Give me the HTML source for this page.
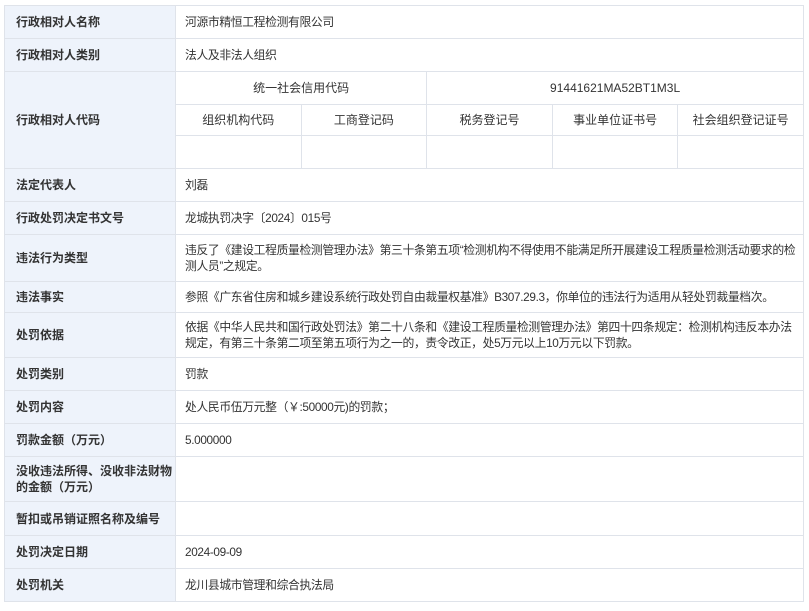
<!DOCTYPE html>
<html><head><meta charset="utf-8"><style>
body{margin:0;background:#fff;font-family:"Liberation Sans","Noto Sans CJK SC",sans-serif;font-size:12px;color:#333}
.t{position:absolute;left:4px;top:5px;width:800px;border-collapse:collapse;table-layout:fixed}
.t td{border:1px solid #dfe3ea;padding:0 0 0 9px;line-height:16px;vertical-align:middle;overflow:hidden}
.t td.v{letter-spacing:-0.35px;font-size:11.8px;padding-right:0}
.t td.l{background:#eef3fb;font-weight:bold;color:#333;padding-left:11px}
.s{width:100%;border-collapse:collapse;table-layout:fixed;height:100%}
.s td{text-align:center;padding:0;border:1px solid #dfe3ea}
.t td.n{padding:0}
</style></head><body>
<table class="t">
<colgroup><col style="width:171px"><col></colgroup>
<tr style="height:33px"><td class="l">行政相对人名称</td><td class="v">河源市精恒工程检测有限公司</td></tr>
<tr style="height:33px"><td class="l">行政相对人类别</td><td class="v">法人及非法人组织</td></tr>
<tr style="height:96px"><td class="l">行政相对人代码</td><td class="n">
<table class="s" style="margin:-1px;width:calc(100% + 2px);height:98px">
<tr style="height:33px"><td colspan="2">统一社会信用代码</td><td colspan="3">91441621MA52BT1M3L</td></tr>
<tr style="height:30px"><td>组织机构代码</td><td>工商登记码</td><td>税务登记号</td><td>事业单位证书号</td><td>社会组织登记证号</td></tr>
<tr style="height:33px"><td></td><td></td><td></td><td></td><td></td></tr>
</table></td></tr>
<tr style="height:33px"><td class="l">法定代表人</td><td class="v">刘磊</td></tr>
<tr style="height:33px"><td class="l">行政处罚决定书文号</td><td class="v">龙城执罚决字〔2024〕015号</td></tr>
<tr style="height:47px"><td class="l">违法行为类型</td><td class="v">违反了《建设工程质量检测管理办法》第三十条第五项“检测机构不得使用不能满足所开展建设工程质量检测活动要求的检测人员”之规定。</td></tr>
<tr style="height:31px"><td class="l">违法事实</td><td class="v">参照《广东省住房和城乡建设系统行政处罚自由裁量权基准》B307.29.3，你单位的违法行为适用从轻处罚裁量档次。</td></tr>
<tr style="height:45px"><td class="l">处罚依据</td><td class="v">依据《中华人民共和国行政处罚法》第二十八条和《建设工程质量检测管理办法》第四十四条规定：检测机构违反本办法规定，有第三十条第二项至第五项行为之一的，责令改正，处5万元以上10万元以下罚款。</td></tr>
<tr style="height:33px"><td class="l">处罚类别</td><td class="v">罚款</td></tr>
<tr style="height:33px"><td class="l">处罚内容</td><td class="v">处人民币伍万元整（￥:50000元)的罚款；</td></tr>
<tr style="height:33px"><td class="l">罚款金额（万元）</td><td class="v">5.000000</td></tr>
<tr style="height:45px"><td class="l">没收违法所得、没收非法财物的金额（万元）</td><td></td></tr>
<tr style="height:34px"><td class="l">暂扣或吊销证照名称及编号</td><td></td></tr>
<tr style="height:33px"><td class="l">处罚决定日期</td><td class="v">2024-09-09</td></tr>
<tr style="height:33px"><td class="l">处罚机关</td><td class="v">龙川县城市管理和综合执法局</td></tr>
</table>
</body></html>
